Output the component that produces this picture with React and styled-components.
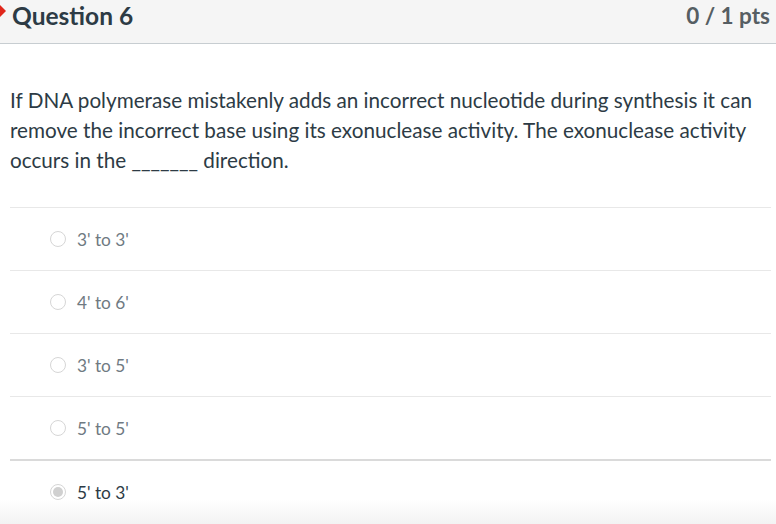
import React from 'react';
import styled, { createGlobalStyle } from 'styled-components';

const GlobalStyle = createGlobalStyle`
  html, body {
    margin: 0;
    padding: 0;
    background: #fff;
  }
  body {
    font-family: Lato, 'Open Sans', sans-serif;
    color: #2d3b45;
  }
`;

const Page = styled.div`
  position: relative;
  width: 776px;
  height: 524px;
  overflow: hidden;
  background: linear-gradient(to bottom, #fff 0, #fff 500px, #f3f3f3 524px);
`;

const Header = styled.div`
  position: relative;
  display: flex;
  align-items: center;
  justify-content: space-between;
  height: 43px;
  padding: 0 6px 0 12px;
  background: #f5f5f5;
  border-bottom: 1px solid #c7cdd1;
`;

const Marker = styled.svg`
  position: absolute;
  left: 0;
  top: 5px;
`;

const Title = styled.h2`
  margin: 0;
  font-size: 24.5px;
  font-weight: 700;
  color: #2d3b45;
  margin-top: -13px;
`;

const Points = styled.div`
  font-size: 22.5px;
  font-weight: 700;
  color: #565e63;
  margin-top: -13px;
`;

const Body = styled.div`
  padding: 41px 5px 0 10px;
`;

const QuestionText = styled.p`
  margin: 0 0 32px;
  font-size: 20.7px;
  line-height: 30px;
  color: #2d3b45;
`;

const Answers = styled.div`
  display: flex;
  flex-direction: column;
`;

const Answer = styled.div`
  display: flex;
  align-items: center;
  padding-left: 40px;
  border-top: ${p => (p.$strong ? '2px solid #dadada' : '1px solid #e8e8e8')};
  box-sizing: border-box;
  height: ${p => (p.$strong ? '64px' : '63px')};
`;

const Radio = styled.span`
  position: relative;
  width: 14px;
  height: 14px;
  border-radius: 50%;
  border: 1.5px solid #d6d6d6;
  background: #fff;
  margin-right: 11px;
  flex: none;
  &::after {
    content: '';
    display: ${p => (p.$checked ? 'block' : 'none')};
    position: absolute;
    left: 2px;
    top: 2px;
    width: 10px;
    height: 10px;
    border-radius: 50%;
    background: #d0d0d0;
  }
`;

const Label = styled.span`
  font-size: 17.3px;
  color: ${p => (p.$checked ? '#2d3b45' : '#6f7a82')};
`;

const answers = ["3' to 3'", "4' to 6'", "3' to 5'", "5' to 5'", "5' to 3'"];

export default function App() {
  return (
    <Page>
      <GlobalStyle />
      <Header>
        <Marker width="6" height="12" viewBox="0 0 6 12">
          <path d="M0 0 L6 6 L0 12 Z" fill="#e0261b" />
        </Marker>
        <Title>Question 6</Title>
        <Points>0 / 1 pts</Points>
      </Header>
      <Body>
        <QuestionText>
          If DNA polymerase mistakenly adds an incorrect nucleotide during synthesis it can
          remove the incorrect base using its exonuclease activity. The exonuclease activity
          occurs in the _______ direction.
        </QuestionText>
        <Answers>
          {answers.map((a, i) => {
            const checked = i === answers.length - 1;
            return (
              <Answer key={a} $strong={checked}>
                <Radio $checked={checked} />
                <Label $checked={checked}>{a}</Label>
              </Answer>
            );
          })}
        </Answers>
      </Body>
    </Page>
  );
}
